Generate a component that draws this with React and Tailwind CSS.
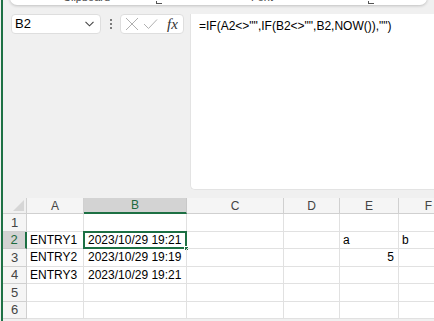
import React from 'react';

const cols = [
  { key: 'A', w: 'w-[57px]' },
  { key: 'B', w: 'w-[103px]' },
  { key: 'C', w: 'w-[97px]' },
  { key: 'D', w: 'w-[56px]' },
  { key: 'E', w: 'w-[59px]' },
  { key: 'F', w: 'w-[60px]' },
];

const data = {
  '2A': 'ENTRY1', '2B': '2023/10/29 19:21', '2E': 'a', '2F': 'b',
  '3A': 'ENTRY2', '3B': '2023/10/29 19:19', '3E': '5',
  '4A': 'ENTRY3', '4B': '2023/10/29 19:21',
};

const Cell = ({ row, col }) => {
  const v = data[row + col.key];
  const selected = row === 2 && col.key === 'B';
  const isNum = v === '5';
  return (
    <div className={`${col.w} shrink-0 h-full relative border-r border-b border-[#e1e1e1] flex items-center text-[12px] text-black ${isNum ? 'justify-end pr-[4px]' : 'pl-[3px]'} ${col.key === 'B' ? 'pl-[4px]' : ''}`}>
      {v}
      {selected && (
        <>
          <div className="absolute -left-px -top-px -right-px -bottom-px border-2 border-[#1d7044]" />
          <div className="absolute -right-[3px] -bottom-[3px] w-[5px] h-[5px] bg-[#1d7044] border border-white" />
        </>
      )}
    </div>
  );
};

const App = () => {
  return (
    <div className="w-[434px] h-[321px] overflow-hidden bg-[#f0f0f0] pl-px" style={{ fontFamily: '"Liberation Sans", Arial, sans-serif' }}>
      <div className="h-full border-l-2 border-[#1e7145] flex flex-col">
        {/* ribbon bottom */}
        <div className="ml-[7px] mr-[7px] h-[20px] -mt-[15px] bg-white rounded-b-[7px] shadow-[0_1px_3px_rgba(0,0,0,0.2)] text-[11px] text-[#444] leading-none relative overflow-hidden">
          <span className="absolute left-[53px] bottom-[2px]">Clipboard</span>
          <span className="absolute left-[146px] bottom-[1px] w-[6px] h-[3px] border-l border-b border-[#555]" />
          <span className="absolute left-[241px] bottom-[2px]">Font</span>
          <span className="absolute left-[358px] bottom-[1px] w-[6px] h-[3px] border-l border-b border-[#555]" />
        </div>

        {/* formula bar */}
        <div className="flex mt-[9px] h-[176px]">
          <div className="ml-[8px] w-[90px] h-[20px] bg-white border border-[#dedede] rounded-[4px] flex items-center justify-between pl-[3px] pr-[6px]">
            <span className="text-[13px] text-black">B2</span>
            <svg width="9" height="6" viewBox="0 0 9 6"><path d="M0.5 0.8 L4.5 4.8 L8.5 0.8" fill="none" stroke="#444" strokeWidth="1.1" /></svg>
          </div>
          <div className="w-[19px] h-[20px] flex flex-col items-center justify-center gap-[2px]">
            <span className="w-[2px] h-[2px] bg-[#555] rounded-full" />
            <span className="w-[2px] h-[2px] bg-[#555] rounded-full" />
            <span className="w-[2px] h-[2px] bg-[#555] rounded-full" />
          </div>
          <div className="w-[64px] h-[20px] bg-white border border-[#dedede] rounded-[4px] flex items-center pl-[4px]">
            <svg width="14" height="14" viewBox="0 0 14 14"><path d="M1 1 L13 13 M13 1 L1 13" stroke="#b0b0b0" strokeWidth="1" /></svg>
            <svg width="15" height="12" viewBox="0 0 15 12" className="ml-[4px]"><path d="M1 6 L5.5 10.5 L14 1.5" fill="none" stroke="#b0b0b0" strokeWidth="1" /></svg>
            <span className="ml-[9px] text-[15px] italic text-[#333] leading-none" style={{ fontFamily: '"Liberation Serif", serif' }}>fx</span>
          </div>
          <div className="ml-[6px] flex-1 bg-white rounded-bl-[5px] border-l border-b border-[#e3e3e3] pl-[8px] pt-[3px] text-[12px] text-black">
            =IF(A2&lt;&gt;"",IF(B2&lt;&gt;"",B2,NOW()),"")
          </div>
        </div>

        {/* grid */}
        <div className="mt-[8px] flex flex-col">
          <div className="flex h-[16px] text-[12px] text-[#444]">
            <div className="w-[24px] shrink-0 h-full bg-[#f0f0f0] border-r border-b border-[#d0d0d0] flex items-end justify-end p-[2px]">
              <svg width="11" height="11" viewBox="0 0 11 11"><path d="M11 0 L11 11 L0 11 Z" fill="#d6d6d6" /></svg>
            </div>
            {cols.map((c) => (
              <div
                key={c.key}
                className={`${c.w} shrink-0 h-full flex items-center justify-center border-r ${c.key === 'B' ? 'bg-[#d3d3d3] text-[#1d6a3e] border-b-2 border-b-[#1d7044] border-r-[#c8c8c8]' : 'bg-[#f5f5f5] border-b border-[#d0d0d0]'}`}
              >
                {c.key}
              </div>
            ))}
          </div>
          {[1, 2, 3, 4, 5, 6].map((r) => (
            <div key={r} className="flex h-[17.5px] bg-white">
              <div className={`w-[24px] shrink-0 h-full flex items-center justify-center text-[13px] border-b ${r === 2 ? 'bg-[#d3d3d3] text-[#1d6a3e] border-r-2 border-r-[#1d7044] border-b-[#c8c8c8]' : 'bg-[#f5f5f5] text-[#444] border-r border-[#d0d0d0]'}`}>
                {r}
              </div>
              {cols.map((c) => (
                <Cell key={c.key} row={r} col={c} />
              ))}
            </div>
          ))}
        </div>
      </div>
    </div>
  );
};

export default App;
